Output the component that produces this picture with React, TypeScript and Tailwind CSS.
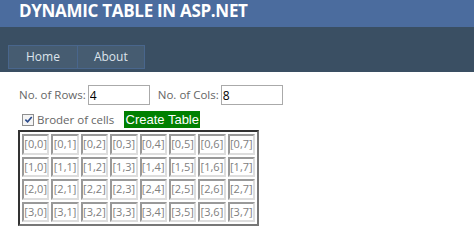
const rows = [0, 1, 2, 3];
const cols = [0, 1, 2, 3, 4, 5, 6, 7];

export default function App() {
  return (
    <div className="h-[248px] w-[474px] overflow-hidden bg-white font-['Open_Sans',sans-serif]">
      {/* header */}
      <div className="flex h-[27px] items-start bg-[#4b6c9e] pl-[19px]">
        <h1 className="pt-[1px] text-[17px] leading-[20px] font-bold tracking-[-0.3px] whitespace-nowrap text-white">
          DYNAMIC TABLE IN ASP.NET
        </h1>
      </div>
      <div className="flex h-[45px] items-end bg-[#3a4f63] pb-[3px] pl-[8px]">
        <a className="border border-[#4b6c9e]/60 bg-[#465c71] px-[17px] py-[2px] text-[12px] leading-[18px] text-[#dde4ec]">
          Home
        </a>
        <a className="border border-l-0 border-[#4b6c9e]/60 bg-[#465c71] px-[16px] py-[2px] text-[12px] leading-[18px] text-[#dde4ec]">
          About
        </a>
      </div>

      {/* form */}
      <div className="pt-[13px] pl-[19px] text-[11.5px] text-[#666]">
        <div className="flex items-center">
          <span>No. of Rows:</span>
          <input
            readOnly
            value="4"
            className="ml-[2px] h-[20px] w-[62px] border border-[#aaa] px-[1px] text-[12px] text-black outline-none"
          />
          <span className="ml-[8px]">No. of Cols:</span>
          <input
            readOnly
            value="8"
            className="ml-[2px] h-[20px] w-[62px] border border-[#aaa] px-[1px] text-[12px] text-black outline-none"
          />
        </div>
        <div className="mt-[6px] flex h-[17px] items-center">
          <span className="ml-[3px] flex h-[12px] w-[12px] items-center justify-center border border-[#8f8f8f] bg-[#f4f4f4]">
            <svg viewBox="0 0 10 10" className="h-[9px] w-[9px]">
              <path d="M1.5 5.2 L4 7.6 L8.6 2.2" fill="none" stroke="#2a4a8a" strokeWidth="1.8" />
            </svg>
          </span>
          <span className="ml-[3px]">Broder of cells</span>
          <button className="ml-[10px] h-[17px] w-[76px] bg-[#008000] font-['Liberation_Sans',sans-serif] text-[13px] leading-[17px] whitespace-nowrap text-white">
            Create Table
          </button>
        </div>
        <table className="mt-[2px] -ml-px w-[241px] table-fixed border-separate border-spacing-[2px] border-2 border-t-[#333] border-l-[#333] border-r-[#777] border-b-[#777]">
          <tbody>
            {rows.map((r) => (
              <tr key={r}>
                {cols.map((c) => (
                  <td
                    key={c}
                    className="h-[20.5px] border-2 border-t-[#999] border-l-[#999] border-r-[#ddd] border-b-[#ddd] px-0 text-center text-[11px] leading-[14px] whitespace-nowrap text-[#808080]"
                  >
                    [{r},{c}]
                  </td>
                ))}
              </tr>
            ))}
          </tbody>
        </table>
      </div>
    </div>
  );
}
